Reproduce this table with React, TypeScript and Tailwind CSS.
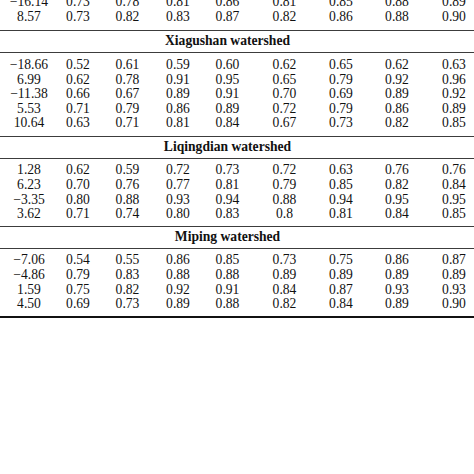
import React from "react";

type Section = { title?: string; rows: string[][] };

const sections: Section[] = [
  {
    rows: [
      ["\u221216.14", "0.73", "0.78", "0.81", "0.86", "0.81", "0.85", "0.88", "0.89"],
      ["8.57", "0.73", "0.82", "0.83", "0.87", "0.82", "0.86", "0.88", "0.90"],
    ],
  },
  {
    title: "Xiagushan watershed",
    rows: [
      ["\u221218.66", "0.52", "0.61", "0.59", "0.60", "0.62", "0.65", "0.62", "0.63"],
      ["6.99", "0.62", "0.78", "0.91", "0.95", "0.65", "0.79", "0.92", "0.96"],
      ["\u221211.38", "0.66", "0.67", "0.89", "0.91", "0.70", "0.69", "0.89", "0.92"],
      ["5.53", "0.71", "0.79", "0.86", "0.89", "0.72", "0.79", "0.86", "0.89"],
      ["10.64", "0.63", "0.71", "0.81", "0.84", "0.67", "0.73", "0.82", "0.85"],
    ],
  },
  {
    title: "Liqingdian watershed",
    rows: [
      ["1.28", "0.62", "0.59", "0.72", "0.73", "0.72", "0.63", "0.76", "0.76"],
      ["6.23", "0.70", "0.76", "0.77", "0.81", "0.79", "0.85", "0.82", "0.84"],
      ["\u22123.35", "0.80", "0.88", "0.93", "0.94", "0.88", "0.94", "0.95", "0.95"],
      ["3.62", "0.71", "0.74", "0.80", "0.83", "0.8", "0.81", "0.84", "0.85"],
    ],
  },
  {
    title: "Miping watershed",
    rows: [
      ["\u22127.06", "0.54", "0.55", "0.86", "0.85", "0.73", "0.75", "0.86", "0.87"],
      ["\u22124.86", "0.79", "0.83", "0.88", "0.88", "0.89", "0.89", "0.89", "0.89"],
      ["1.59", "0.75", "0.82", "0.92", "0.91", "0.84", "0.87", "0.93", "0.93"],
      ["4.50", "0.69", "0.73", "0.89", "0.88", "0.82", "0.84", "0.89", "0.90"],
    ],
  },
];

function Rows({ rows }: { rows: string[][] }) {
  return (
    <div className="grid grid-cols-[58px_40px_59px_42px_57px_57px_56px_56px_58px]">
      {rows.map((r, i) =>
        r.map((c, j) => (
          <div key={i + "-" + j} className="h-[14.6px] leading-[14.6px] text-center whitespace-nowrap">
            {c}
          </div>
        ))
      )}
    </div>
  );
}

function Rule() {
  return <div className="h-px w-full bg-[#3c3c3c]" />;
}

export default function App() {
  return (
    <div
      className="w-[474px] h-[474px] overflow-hidden bg-white text-[13.6px] text-[#111]"
      style={{ fontFamily: '"Liberation Serif", "Times New Roman", serif' }}
    >
      <div className="-mt-[4.6px] pb-[5.4px]">
        <Rows rows={sections[0].rows} />
      </div>
      {sections.slice(1).map((s, k) => (
        <div key={k}>
          <Rule />
          <div className="h-[21px] flex items-center justify-center pr-[19px] font-bold">{s.title}</div>
          <Rule />
          <div className={k === 0 ? "pt-[5px] pb-[5px]" : "pt-[4.5px] pb-[4px]"}>
            <Rows rows={s.rows} />
          </div>
        </div>
      ))}
      <div className="h-[2px] w-full bg-[#111]" />
    </div>
  );
}
